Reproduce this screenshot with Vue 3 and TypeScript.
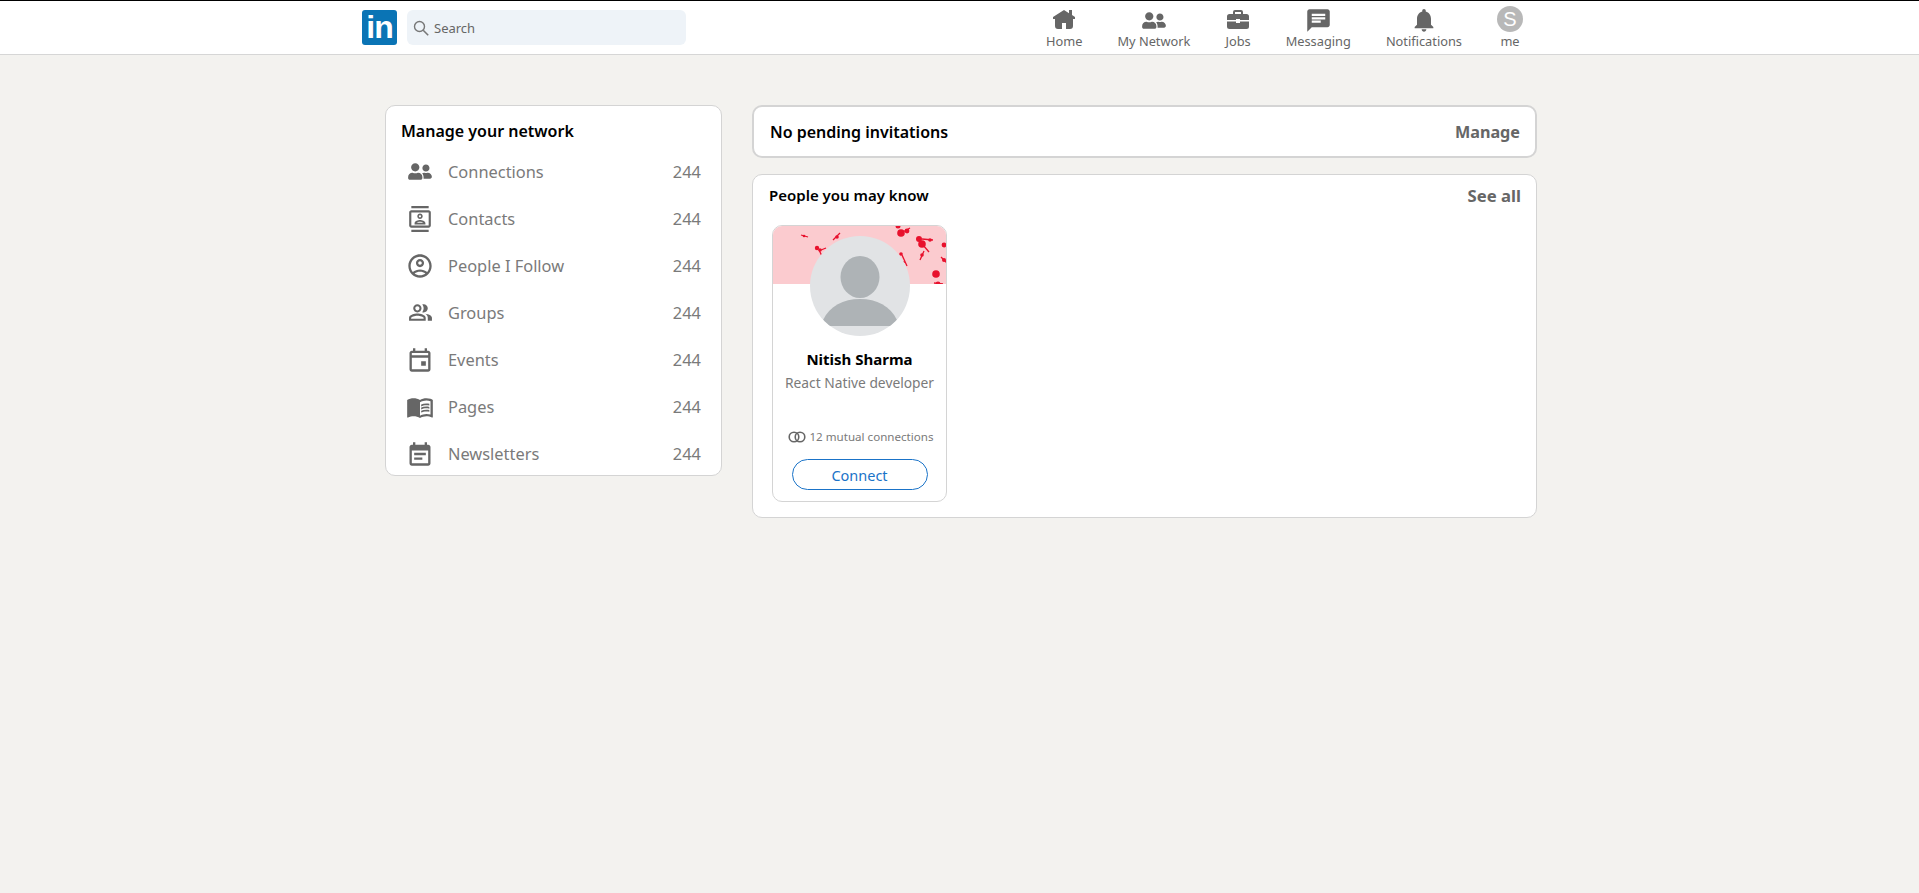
<script setup lang="ts">
interface NavItem { label: string; view: string; w: number; h: number; d: string }
interface Row { label: string; w: number; h: number; vb: string; d: string }

const nav: NavItem[] = [
  { label: 'Home', view: '0 0 24 24', w: 24, h: 24, d: 'M23 9v2h-2v7a3 3 0 01-3 3h-4v-6h-4v6H6a3 3 0 01-3-3v-7H1V9l11-7 5 3.18V2h3v5.09z' },
  { label: 'My Network', view: '0 0 640 512', w: 24, h: 19, d: 'M192 256c61.9 0 112-50.1 112-112S253.9 32 192 32 80 82.1 80 144s50.1 112 112 112zm76.8 32h-8.3c-20.8 10-43.9 16-68.5 16s-47.6-6-68.5-16h-8.3C51.6 288 0 339.6 0 403.2V432c0 26.5 21.5 48 48 48h288c26.5 0 48-21.5 48-48v-28.8c0-63.6-51.6-115.2-115.2-115.2zM480 256c53 0 96-43 96-96s-43-96-96-96-96 43-96 96 43 96 96 96zm48 32h-3.8c-13.9 4.8-28.6 8-44.2 8s-30.3-3.2-44.2-8H432c-20.4 0-39.2 5.9-55.7 15.4 24.4 26.3 39.7 61.2 39.7 99.8v38.4c0 2.2-.5 4.3-.6 6.4H592c26.5 0 48-21.5 48-48 0-61.9-50.1-112-112-112z' },
  { label: 'Jobs', view: '0 0 24 24', w: 24, h: 24, d: 'M9 2h6a2 2 0 012 2v2h3.500A2.500 2.500 0 0123 8.500V12H14v-1h-4v1H1V8.500A2.500 2.500 0 013.500 6H7V4a2 2 0 012-2zm0 2v2h6V4zM1 13.500h9V15h4v-1.500h9v5A2.500 2.500 0 0120.500 21h-17A2.500 2.500 0 011 18.500z' },
  { label: 'Messaging', view: '0 0 24 24', w: 27, h: 27, d: 'M20 2H4c-1.100 0-2 .9-2 2v18l4-4h14c1.100 0 2-.9 2-2V4c0-1.100-.9-2-2-2zM6 9h12v2H6V9zm8 5H6v-2h8v2zm4-6H6V6h12v2z' },
  { label: 'Notifications', view: '0 0 24 24', w: 28, h: 28, d: 'M12 22c1.100 0 2-.9 2-2h-4c0 1.100.89 2 2 2zm6-6v-5c0-3.070-1.640-5.640-4.500-6.320V4c0-.83-.67-1.500-1.500-1.500s-1.500.67-1.500 1.500v.68C7.630 5.360 6 7.920 6 11v5l-2 2v1h16v-1l-2-2z' },
]

const rows: Row[] = [
  { label: 'Connections', vb: '0 0 640 512', w: 24, h: 19, d: nav[1].d },
  { label: 'Contacts', vb: '0 0 24 24', w: 26, h: 26, d: 'M20 0H4v2h16V0zM4 24h16v-2H4v2zM20 4H4c-1.100 0-2 .9-2 2v12c0 1.100.9 2 2 2h16c1.100 0 2-.9 2-2V6c0-1.100-.9-2-2-2zm0 14H4V6h16v12zM12 12c1.380 0 2.500-1.120 2.500-2.500S13.380 7 12 7 9.500 8.120 9.500 9.500 10.620 12 12 12zm0-3.500c.55 0 1 .45 1 1s-.45 1-1 1-1-.45-1-1 .45-1 1-1zm5 7.490c0-2.090-3.310-2.990-5-2.990s-5 .9-5 2.990V17h10v-1.010zM8.810 15.500c.61-.52 2.030-1 3.190-1 1.170 0 2.590.48 3.200 1H8.810z' },
  { label: 'People I Follow', vb: '0 0 24 24', w: 28, h: 28, d: 'M12 2C6.480 2 2 6.480 2 12s4.480 10 10 10 10-4.480 10-10S17.520 2 12 2zM7.350 18.500C8.660 17.560 10.260 17 12 17s3.340.56 4.650 1.500c-1.310.94-2.910 1.500-4.650 1.500s-3.340-.56-4.650-1.500zm10.790-1.380C16.450 15.800 14.320 15 12 15s-4.450.8-6.140 2.120C4.700 15.730 4 13.950 4 12c0-4.420 3.580-8 8-8s8 3.580 8 8c0 1.950-.7 3.730-1.860 5.120zM12 6c-1.930 0-3.500 1.570-3.500 3.500S10.070 13 12 13s3.500-1.570 3.500-3.500S13.930 6 12 6zm0 5c-.83 0-1.500-.67-1.500-1.500S11.170 8 12 8s1.500.67 1.500 1.500S12.830 11 12 11z' },
  { label: 'Groups', vb: '0 0 24 24', w: 25, h: 25, d: 'M16.670 13.130C18.040 14.060 19 15.320 19 17v3h4v-3c0-2.180-3.570-3.470-6.330-3.870zM15 12c2.210 0 4-1.790 4-4s-1.790-4-4-4c-.47 0-.91.1-1.330.24C14.500 5.270 15 6.580 15 8s-.5 2.730-1.330 3.760c.42.14.86.24 1.330.24zM9 12c2.210 0 4-1.790 4-4s-1.790-4-4-4-4 1.790-4 4 1.790 4 4 4zm0-6c1.100 0 2 .9 2 2s-.9 2-2 2-2-.9-2-2 .9-2 2-2zM9 13c-2.670 0-8 1.340-8 4v3h16v-3c0-2.660-5.330-4-8-4zm6 5H3v-.99C3.200 16.290 6.300 15 9 15s5.800 1.290 6 2v1z' },
  { label: 'Events', vb: '0 0 24 24', w: 28, h: 28, d: 'M19 4h-1V2h-2v2H8V2H6v2H5c-1.110 0-1.990.9-1.990 2L3 20c0 1.100.89 2 2 2h14c1.100 0 2-.9 2-2V6c0-1.100-.9-2-2-2zm0 16H5V10h14v10zm0-12H5V6h14v2zm-6 5h4v4h-4z' },
  { label: 'Pages', vb: '0 0 24 24', w: 28, h: 28, d: 'M21 5c-1.110-.35-2.330-.5-3.500-.5-1.950 0-4.050.4-5.500 1.500-1.450-1.100-3.550-1.500-5.500-1.500S2.450 4.900 1 6v14.650c0 .25.25.5.5.5.1 0 .15-.05.25-.05C3.100 20.450 5.050 20 6.500 20c1.950 0 4.050.4 5.500 1.500 1.350-.85 3.800-1.500 5.500-1.500 1.650 0 3.350.3 4.750 1.050.1.05.15.05.25.05.25 0 .5-.25.5-.5V6c-.6-.45-1.250-.75-2-1zm0 13.500c-1.100-.35-2.300-.5-3.500-.5-1.700 0-4.150.65-5.500 1.500V8c1.350-.85 3.800-1.500 5.500-1.500 1.200 0 2.400.15 3.500.5v11.500zM17.500 10.500c.88 0 1.730.09 2.500.26V9.240c-.79-.15-1.640-.24-2.500-.24-1.700 0-3.240.29-4.500.83v1.660c1.130-.64 2.700-.99 4.500-.99zM13 12.490v1.660c1.130-.64 2.700-.99 4.500-.99.88 0 1.730.09 2.500.26V11.900c-.79-.15-1.640-.24-2.500-.24-1.700 0-3.240.3-4.500.83zM17.500 14.330c-1.700 0-3.240.29-4.500.83v1.660c1.130-.64 2.700-.99 4.500-.99.88 0 1.730.09 2.500.26v-1.520c-.79-.16-1.640-.24-2.500-.24z' },
  { label: 'Newsletters', vb: '0 0 24 24', w: 28, h: 28, d: 'M17 11H7v2h10v-2zm2-7h-1V2h-2v2H8V2H6v2H5c-1.110 0-1.990.9-1.990 2L3 20c0 1.100.89 2 2 2h14c1.100 0 2-.9 2-2V6c0-1.100-.9-2-2-2zm0 16H5V9h14v11zm-5-5H7v2h7v-2z' },
]

const pins: [number, number, number][] = [
  [31, 10, 1.300], [64, 11, 1.800], [44, 22, 2.200], [47, 24, 1.800], [125, 0, 2.500], [128, 7, 3.800], [134, 5, 2.400],
  [146, 13, 3], [149, 18, 3.800], [157, 14, 1.800], [171, 19, 2.400], [128, 28, 1.800], [131, 36, 1], [149, 29, 1.800],
  [171, 34, 2], [163, 48, 3.800], [165, 58, 2.400],
]
const stems: [number, number, number, number][] = [
  [28, 9, 35, 11], [60, 14, 67, 7], [48, 24, 53, 22], [46, 24, 49, 30], [128, 7, 137, 2], [149, 13, 160, 14],
  [150, 19, 156, 26], [147, 34, 151, 25], [129, 29, 134, 40], [168, 31, 174, 37], [161, 57, 170, 58],
]
</script>

<template>
  <div class="page">
    <header class="topbar">
      <div class="logo">in</div>
      <label class="search">
        <svg class="search-icon" viewBox="0 0 16 16" width="16" height="16">
          <circle cx="6.500" cy="6.500" r="5" fill="none" stroke="#777" stroke-width="1.400" />
          <path d="M10.200 10.200l5 5" stroke="#777" stroke-width="1.600" />
        </svg>
        <span>Search</span>
      </label>
      <nav class="nav">
        <div v-for="item in nav" :key="item.label" class="nav-item">
          <span class="nav-icon">
            <svg :viewBox="item.view" :width="item.w" :height="item.h"><path :d="item.d" fill="#666" /></svg>
          </span>
          <span class="nav-label">{{ item.label }}</span>
        </div>
        <div class="nav-item me">
          <span class="avatar">S</span>
          <span class="me-label">me</span>
        </div>
      </nav>
    </header>

    <main class="main">
      <aside class="manage card">
        <h2 class="manage-title">Manage your network</h2>
        <div v-for="row in rows" :key="row.label" class="row">
          <span class="row-icon">
            <svg :viewBox="row.vb" :width="row.w" :height="row.h"><path :d="row.d" fill="#666" /></svg>
          </span>
          <span class="row-label">{{ row.label }}</span>
          <span class="row-count">244</span>
        </div>
      </aside>

      <section class="content">
        <div class="invites card">
          <span class="head-text">No pending invitations</span>
          <span class="head-action manage-link">Manage</span>
        </div>
        <div class="people card">
          <div class="people-head">
            <span class="head-text small">People you may know</span>
            <span class="head-action">See all</span>
          </div>
          <article class="person">
            <div class="banner">
              <svg viewBox="0 0 175 58" width="175" height="58">
                <circle v-for="(p, i) in pins" :key="'p' + i" :cx="p[0]" :cy="p[1]" :r="p[2]" fill="#e8112d" />
                <line v-for="(s, i) in stems" :key="'s' + i" :x1="s[0]" :y1="s[1]" :x2="s[2]" :y2="s[3]" stroke="#e8112d" stroke-width="1.300" />
              </svg>
            </div>
            <div class="photo">
              <svg viewBox="0 0 100 100" width="100" height="100">
                <ellipse cx="50" cy="41" rx="19.500" ry="21" fill="#aeb3b6" />
                <path d="M13 84C20 70 33 63 50 63s30 7 37 21l-3 6H16z" fill="#aeb3b6" />
              </svg>
            </div>
            <div class="name">Nitish Sharma</div>
            <div class="role">React Native developer</div>
            <div class="mutual">
              <svg viewBox="0 0 18 12" width="18" height="12">
                <circle cx="6" cy="6" r="4.800" fill="none" stroke="#666" stroke-width="1.600" />
                <circle cx="12" cy="6" r="4.800" fill="none" stroke="#666" stroke-width="1.600" />
              </svg>
              <span>12 mutual connections</span>
            </div>
            <button class="connect" type="button">Connect</button>
          </article>
        </div>
      </section>
    </main>
  </div>
</template>

<style>
html, body { margin: 0; background: #f3f2ef; }
</style>

<style scoped>
.page {
  min-height: 893px;
  background: #f3f2ef;
  font-family: "Noto Sans", "Open Sans", sans-serif;
}
.topbar {
  box-sizing: border-box;
  height: 55px;
  display: flex;
  align-items: flex-start;
  padding: 0 396px 0 362px;
  background: #fff;
  border-top: 1px solid #000;
  border-bottom: 1px solid #d6d6d6;
}
.logo {
  width: 35px;
  height: 35px;
  margin-top: 9px;
  border-radius: 3px;
  background: #0a74b5;
  color: #fff;
  font: 700 32px/35px "Liberation Sans", sans-serif;
  letter-spacing: -1px;
  text-align: center;
}
.search {
  width: 279px;
  height: 35px;
  margin: 9px 0 0 10px;
  padding-left: 6px;
  box-sizing: border-box;
  display: flex;
  align-items: center;
  gap: 5px;
  background: #eef3f8;
  border-radius: 6px;
  color: #666;
  font-size: 13px;
}
.nav {
  display: flex;
  gap: 35px;
  margin-left: auto;
}
.nav-item {
  display: flex;
  flex-direction: column;
  align-items: center;
  color: #666;
  font-size: 12.800px;
}
.nav-icon {
  height: 28px;
  margin-top: 5px;
  display: flex;
  align-items: center;
  justify-content: center;
}
.nav-label {
  line-height: 18px;
  margin-top: -2px;
  white-space: nowrap;
}
.me { width: 26px; }
.avatar {
  width: 26px;
  height: 26px;
  margin-top: 5px;
  border-radius: 50%;
  background: #b8b8b8;
  color: #fff;
  font: 400 20px/26px "Liberation Sans", sans-serif;
  text-align: center;
}
.me-label {
  line-height: 18px;
}
.main {
  display: flex;
  align-items: flex-start;
  gap: 30px;
  padding: 50px 0 0 385px;
}
.card {
  box-sizing: border-box;
  background: #fff;
  border: 1px solid #d4d4d4;
  border-radius: 10px;
}
.manage {
  width: 337px;
  height: 371px;
  padding: 0 20px 0 15px;
  overflow: hidden;
}
.manage-title {
  margin: 14px 0 6px;
  color: #000;
  font-size: 16px;
  line-height: 22px;
  font-weight: 600;
}
.row {
  height: 47px;
  display: flex;
  align-items: center;
  color: #7a7a7a;
  font-size: 16.400px;
}
.row-icon {
  width: 32px;
  margin-left: 3px;
  margin-right: 12px;
  display: flex;
  justify-content: center;
  flex: none;
}
.row-label { flex: 1; }
.row-count { color: #7a7a7a; }
.content {
  width: 785px;
  display: flex;
  flex-direction: column;
  gap: 16px;
}
.invites {
  height: 53px;
  padding: 0 15px 0 16px;
  border-width: 2px;
  display: flex;
  align-items: center;
  justify-content: space-between;
}
.head-text {
  color: #000;
  font-size: 16px;
  font-weight: 600;
}
.head-text.small { font-size: 15px; }
.head-action {
  color: #666;
  font-size: 16.700px;
  font-weight: 700;
}
.manage-link { font-size: 16.200px; }
.people {
  height: 344px;
  padding: 0 15px 0 16px;
}
.people-head {
  display: flex;
  justify-content: space-between;
  align-items: center;
  height: 40px;
  margin-bottom: 10px;
}
.person {
  position: relative;
  box-sizing: border-box;
  width: 175px;
  height: 277px;
  margin-left: 3px;
  background: #fff;
  border: 1px solid #d4d4d4;
  border-radius: 10px;
  overflow: hidden;
  display: flex;
  flex-direction: column;
  align-items: center;
}
.banner {
  align-self: stretch;
  height: 58px;
  flex: none;
  background: #fbcbcf;
}
.banner svg { display: block; }
.photo {
  position: absolute;
  top: 10px;
  left: 37px;
  width: 100px;
  height: 100px;
  border-radius: 50%;
  background: #e1e3e5;
  overflow: hidden;
}
.photo svg { display: block; }
.name {
  margin-top: 64px;
  color: #000;
  font-size: 15px;
  line-height: 22px;
  font-weight: 700;
}
.role {
  margin-top: 2px;
  color: #7a7a7a;
  font-size: 13.800px;
  line-height: 22px;
}
.mutual {
  margin-top: 35px;
  padding-left: 3px;
  display: flex;
  align-items: center;
  gap: 3px;
  color: #7a7a7a;
  font-size: 11.600px;
  line-height: 16px;
}
.connect {
  width: 136px;
  height: 31px;
  margin-top: 14px;
  background: #fff;
  border: 1px solid #1a73c8;
  border-radius: 16px;
  color: #1a73c8;
  font: 400 14.500px "Noto Sans", sans-serif;
}
</style>
